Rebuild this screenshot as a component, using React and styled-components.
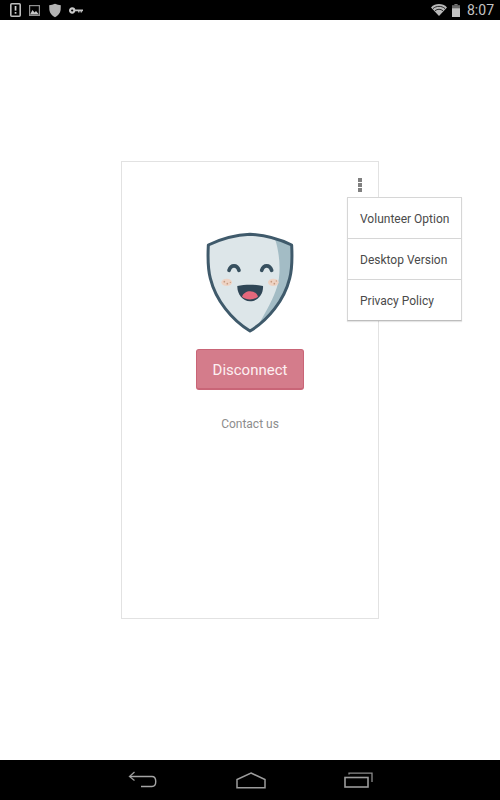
import styled, { createGlobalStyle } from "styled-components";

const GlobalStyle = createGlobalStyle`
  html, body {
    margin: 0;
    padding: 0;
    background: #fff;
    font-family: Roboto, "Liberation Sans", sans-serif;
  }
`;

const menuItems = ["Volunteer Option", "Desktop Version", "Privacy Policy"];

const App = () => {
  return (
    <Page>
      <GlobalStyle />
      <StatusBar>
        <StatusLeft>
          <svg width="11" height="14" viewBox="0 0 11 14">
            <rect x="0.8" y="0.8" width="9.4" height="12.4" rx="1" fill="none" stroke="#bdbdbd" strokeWidth="1.6" />
            <rect x="4.7" y="3" width="1.7" height="4.6" fill="#d0d0d0" />
            <rect x="4.7" y="9" width="1.7" height="1.7" fill="#d0d0d0" />
          </svg>
          <svg width="11" height="11" viewBox="0 0 11 11">
            <rect x="0.6" y="0.6" width="9.8" height="9.8" fill="none" stroke="#8f8f8f" strokeWidth="1.2" />
            <path d="M1 9.5 L3.5 5 L5.5 7.5 L7 6 L10 9.5 Z" fill="#c8c8c8" />
          </svg>
          <ShieldIcon width="12" height="15" viewBox="0 0 13 15">
            <path d="M6.5 0.3 C8.5 1.2 10.8 1.7 12.8 1.7 L12.6 7 C12.3 10.5 9.5 13.2 6.5 14.8 C3.5 13.2 0.7 10.5 0.4 7 L0.2 1.7 C2.2 1.7 4.5 1.2 6.5 0.3 Z" fill="#b4b4b4" />
          </ShieldIcon>
          <svg width="14" height="7" viewBox="0 0 15 7">
            <circle cx="3.4" cy="3.5" r="2.3" fill="none" stroke="#cacaca" strokeWidth="2.2" />
            <path d="M6 2.5 H15 V4.3 H13.8 V5.6 H12.4 V4.3 H11.2 V5.6 H9.8 V4.3 H6 Z" fill="#c4c4c4" />
          </svg>
        </StatusLeft>
        <StatusRight>
          <svg width="16" height="12" viewBox="0 0 16 12">
            <path d="M0 3.4 C4.4 -1 11.6 -1 16 3.4 L8 12 Z" fill="#b8b8b8" />
            <path d="M2 4.6 C5.4 1.6 10.6 1.6 14 4.6" fill="none" stroke="#000" strokeWidth="0.8" />
            <path d="M4 6.8 C6.4 4.8 9.6 4.8 12 6.8" fill="none" stroke="#000" strokeWidth="0.8" />
          </svg>
          <svg width="8" height="13" viewBox="0 0 8 13">
            <rect x="2.4" y="0" width="3.2" height="1.4" fill="#7a7a7a" />
            <rect x="0" y="1.2" width="8" height="3.2" fill="#6a6a6a" />
            <rect x="0" y="4.2" width="8" height="8.8" fill="#c2c2c2" />
          </svg>
          <Clock>8:07</Clock>
        </StatusRight>
      </StatusBar>

      <Main>
        <Card>
          <Kebab>
            <Dot />
            <Dot />
            <Dot />
          </Kebab>
          <Menu>
            {menuItems.map((item) => (
              <MenuItem key={item}>{item}</MenuItem>
            ))}
          </Menu>
          <svg width="110" height="115" viewBox="0 0 330 345">
            <path
              d="M165 28 C120 30 78 42 40 60 C38 100 38 130 46 160 C62 225 110 285 165 318 C220 285 268 225 284 160 C292 130 292 100 290 60 C252 42 210 30 165 28 Z"
              fill="#dde6e9"
            />
            <path
              d="M240 42 C256 90 258 150 246 186 C236 218 218 252 190 300 C236 268 270 222 284 160 C292 130 292 100 290 60 C274 52 258 46 240 42 Z"
              fill="#a3bcc5"
            />
            <path
              d="M165 28 C120 30 78 42 40 60 C38 100 38 130 46 160 C62 225 110 285 165 318 C220 285 268 225 284 160 C292 130 292 100 290 60 C252 42 210 30 165 28 Z"
              fill="none"
              stroke="#3f5a6b"
              strokeWidth="9"
              strokeLinejoin="round"
            />
            <path d="M102 136 C108 118 126 118 132 136" fill="none" stroke="#37505f" strokeWidth="11" strokeLinecap="round" />
            <path d="M200 136 C206 118 224 118 230 136" fill="none" stroke="#37505f" strokeWidth="11" strokeLinecap="round" />
            <ellipse cx="95" cy="172" rx="16" ry="11" fill="#eed3c4" />
            <ellipse cx="235" cy="172" rx="16" ry="11" fill="#eed3c4" />
            <circle cx="88" cy="170" r="2.5" fill="#c49a80" />
            <circle cx="97" cy="176" r="2.5" fill="#c49a80" />
            <circle cx="106" cy="172" r="2" fill="#c49a80" />
            <circle cx="229" cy="170" r="2.5" fill="#c49a80" />
            <circle cx="238" cy="176" r="2.5" fill="#c49a80" />
            <circle cx="244" cy="168" r="2" fill="#c49a80" />
            <path d="M127 183 C150 178 180 178 204 183 C206 205 190 228 165 229 C142 228 126 205 127 183 Z" fill="#2f4656" />
            <path d="M141 215 C148 193 182 193 189 215 C176 226 154 226 141 215 Z" fill="#e5687c" />
          </svg>
          <DisconnectButton>Disconnect</DisconnectButton>
          <ContactLink>Contact us</ContactLink>
        </Card>
      </Main>

      <NavBar>
        <svg width="30" height="18" viewBox="0 0 30 18">
          <path d="M6.5 1 L1.5 5.5 L6.5 9.5" fill="none" stroke="#9a9a9a" strokeWidth="1.3" />
          <path d="M2 5.5 H24 C29 5.5 29 15.5 24 15.5 H13" fill="none" stroke="#a5a5a5" strokeWidth="1.4" />
        </svg>
        <svg width="30" height="17" viewBox="0 0 30 17">
          <path d="M15 1 L29 7.5 V15.8 H1 V7.5 Z" fill="none" stroke="#9c9c9c" strokeWidth="1.5" />
        </svg>
        <svg width="29" height="16" viewBox="0 0 29 16">
          <rect x="1" y="5.5" width="23" height="9.5" fill="none" stroke="#9c9c9c" strokeWidth="1.6" />
          <path d="M5 2.5 V1.2 H28 V10" fill="none" stroke="#8c8c8c" strokeWidth="1.3" />
        </svg>
      </NavBar>
    </Page>
  );
};

const Page = styled.div`
  width: 500px;
  height: 800px;
  display: flex;
  flex-direction: column;
  overflow: hidden;
`;

const StatusBar = styled.header`
  height: 20px;
  flex: none;
  background: #000;
  display: flex;
  justify-content: space-between;
  align-items: center;
  padding: 0 6px 0 10px;
`;

const StatusLeft = styled.div`
  display: flex;
  align-items: center;
  gap: 8px;
`;

const ShieldIcon = styled.svg`
  margin-left: 1px;
`;

const StatusRight = styled.div`
  display: flex;
  align-items: center;
  gap: 5px;
`;

const Clock = styled.span`
  margin-left: 2px;
  color: #c4c4c4;
  font-size: 14px;
  line-height: 20px;
`;

const Main = styled.main`
  flex: 1;
  display: flex;
  align-items: center;
  justify-content: center;
`;

const Card = styled.section`
  position: relative;
  box-sizing: border-box;
  width: 258px;
  height: 458px;
  border: 1px solid #e2e2e2;
  padding-top: 63px;
  display: flex;
  flex-direction: column;
  align-items: center;
`;

const Kebab = styled.div`
  position: absolute;
  top: 16px;
  right: 16px;
  display: flex;
  flex-direction: column;
  gap: 1px;
`;

const Dot = styled.span`
  width: 4px;
  height: 4px;
  background: #808080;
`;

const Menu = styled.ul`
  position: absolute;
  top: 35px;
  left: 225px;
  box-sizing: border-box;
  width: 115px;
  margin: 0;
  padding: 0;
  list-style: none;
  background: #fff;
  border: 1px solid #d6d6d6;
  border-bottom-color: #bdbdbd;
  box-shadow: 0 1px 1px rgba(0, 0, 0, 0.1);
`;

const MenuItem = styled.li`
  height: 38px;
  display: flex;
  align-items: center;
  padding: 2px 0 0 12px;
  font-size: 12px;
  color: #4a4a4a;
  white-space: nowrap;
  & + & {
    border-top: 1px solid #d6d6d6;
  }
`;

const DisconnectButton = styled.button`
  box-sizing: border-box;
  width: 108px;
  height: 41px;
  margin-top: 9px;
  padding: 1px 0 0;
  border: 1px solid #c96577;
  border-bottom-width: 2px;
  border-radius: 3px;
  background: #d47c8b;
  color: #fdf0f2;
  font-family: inherit;
  font-size: 15px;
`;

const ContactLink = styled.a`
  margin-top: 26px;
  font-size: 12px;
  line-height: 16px;
  color: #8d8d8d;
`;

const NavBar = styled.nav`
  height: 40px;
  flex: none;
  background: #000;
  display: flex;
  align-items: center;
  justify-content: center;
  gap: 78px;
  padding-left: 1px;
`;

export default App;
